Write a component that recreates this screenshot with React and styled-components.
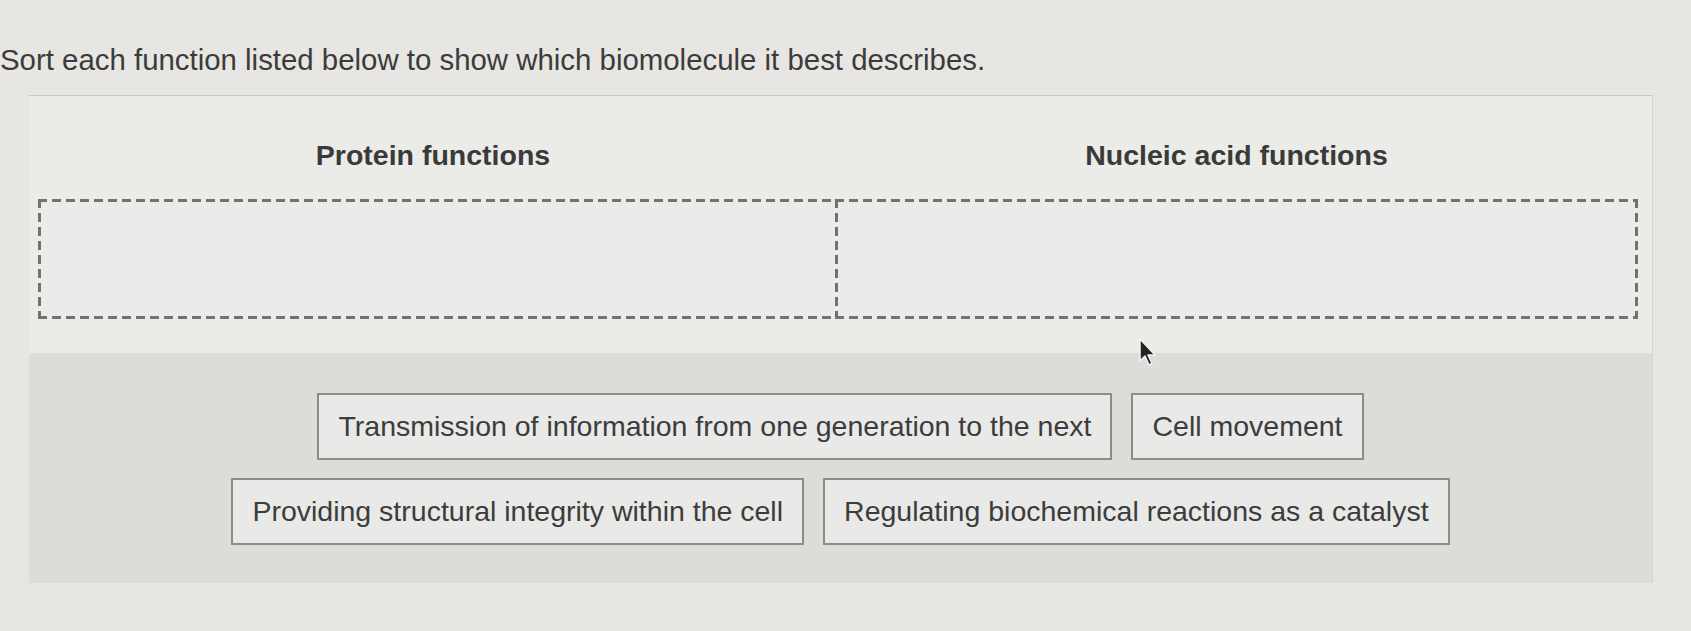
import styled, { createGlobalStyle } from "styled-components";

const GlobalStyle = createGlobalStyle`
  body {
    margin: 0;
    background: #e7e6e3;
    font-family: "Liberation Sans", Arial, sans-serif;
    color: #3a3a3a;
  }
`;

const Page = styled.div`
  position: relative;
  width: 1691px;
  height: 631px;
  overflow: hidden;
`;

const Prompt = styled.p`
  margin: 0;
  padding: 44px 0 0 0;
  height: 51px;
  font-size: 29.4px;
  line-height: 32px;
  color: #3b3b3b;
  white-space: nowrap;
`;

const Panel = styled.div`
  margin: 0 38px 0 29px;
  border-top: 1px solid #c9c9c6;
  border-right: 1px solid #d3d3d0;
  background: #ebebe8;
`;

const Columns = styled.div`
  display: grid;
  grid-template-columns: 1fr 1fr;
  padding: 0 14px 34px 9px;
`;

const Column = styled.div`
  display: flex;
  flex-direction: column;
  align-items: stretch;
  margin-left: ${(p) => (p.$joined ? "-3px" : "0")};
`;

const Heading = styled.h3`
  margin: 0;
  padding: 43px ${(p) => (p.$shift ? "10px" : "0")} 0 0;
  height: 60px;
  text-align: center;
  font-size: 28.5px;
  line-height: 32px;
  font-weight: bold;
  color: #3a3a3a;
`;

const dash = "#727272";

const DropZone = styled.div`
  height: 120px;
  background:
    repeating-linear-gradient(90deg, ${dash} 0 9px, transparent 9px 14px) top / 100% 3px no-repeat,
    repeating-linear-gradient(90deg, ${dash} 0 9px, transparent 9px 14px) bottom / 100% 3px no-repeat,
    repeating-linear-gradient(180deg, ${dash} 0 9px, transparent 9px 14px) left / 3px 100% no-repeat,
    repeating-linear-gradient(180deg, ${dash} 0 9px, transparent 9px 14px) right / 3px 100% no-repeat,
    #ebebe9;
`;

const Tray = styled.div`
  display: flex;
  flex-wrap: wrap;
  justify-content: center;
  gap: 18px 19px;
  padding: 40px 120px 38px;
  background: #dcdcd9;
`;

const Chip = styled.div`
  display: flex;
  align-items: center;
  height: 63px;
  padding: 0 19px;
  border: 2px solid #8c8c8a;
  background: #e9e9e7;
  font-size: 28.5px;
  color: #3c3c3c;
  white-space: nowrap;
`;

const Cursor = styled.svg`
  position: absolute;
  left: 1138px;
  top: 338px;
`;

const chips = [
  "Transmission of information from one generation to the next",
  "Cell movement",
  "Providing structural integrity within the cell",
  "Regulating biochemical reactions as a catalyst",
];

export default function App() {
  return (
    <Page>
      <GlobalStyle />
      <Prompt>Sort each function listed below to show which biomolecule it best describes.</Prompt>
      <Panel>
        <Columns>
          <Column>
            <Heading $shift>Protein functions</Heading>
            <DropZone />
          </Column>
          <Column $joined>
            <Heading>Nucleic acid functions</Heading>
            <DropZone />
          </Column>
        </Columns>
        <Tray>
          {chips.map((c) => (
            <Chip key={c}>{c}</Chip>
          ))}
        </Tray>
      </Panel>
      <Cursor width="20" height="30" viewBox="0 0 20 30">
        <path
          d="M2 1 L2 23 L7 18 L11 27 L14 25.5 L10 17 L17 17 Z"
          fill="#222"
          stroke="#f4f4f4"
          strokeWidth="1.5"
          strokeLinejoin="round"
        />
      </Cursor>
    </Page>
  );
}
